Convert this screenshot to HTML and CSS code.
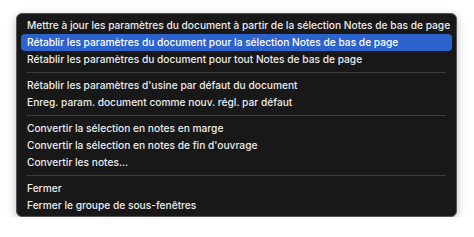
FILE: index.html
```html
<!DOCTYPE html>
<html lang="fr">

<head>
    <meta charset="UTF-8">
    <meta name="viewport" content="width=device-width, initial-scale=1.0">
    <link rel="stylesheet" href="styles.css">
    <title>Menu Notes de bas de page</title>
</head>

<body>
    <div class="menu">
        <div class="menu-item">Mettre à jour les paramètres du document à partir de la sélection Notes de bas de page</div>
        <div class="menu-item active">Rétablir les paramètres du document pour la sélection Notes de bas de page</div>
        <div class="menu-item">Rétablir les paramètres du document pour tout Notes de bas de page</div>
        <div class="menu-separator"></div>
        <div class="menu-item">Rétablir les paramètres d'usine par défaut du document</div>
        <div class="menu-item">Enreg. param. document comme nouv. régl. par défaut</div>
        <div class="menu-separator"></div>
        <div class="menu-item">Convertir la sélection en notes en marge</div>
        <div class="menu-item">Convertir la sélection en notes de fin d'ouvrage</div>
        <div class="menu-item">Convertir les notes...</div>
        <div class="menu-separator"></div>
        <div class="menu-item">Fermer</div>
        <div class="menu-item">Fermer le groupe de sous-fenêtres</div>
    </div>
</body>

</html>
```

FILE: styles.css
```css
html,
body {
    margin: 0;
    background-color: #fff;
}

body {
    padding: 13px 0 0 16px;
    font-family: Inter, "Noto Sans", sans-serif;
}

.menu {
    width: 441px;
    box-sizing: border-box;
    padding: 3px 4px 2px 4px;
    background-color: #181818;
    border: 1px solid #555;
    border-radius: 6px;
    box-shadow: 0 3px 10px rgba(0, 0, 0, 0.25);
}

.menu-item {
    height: 17px;
    line-height: 17px;
    padding: 0 6px;
    font-size: 10.2px;
    font-weight: 500;
    color: #ededed;
    border-radius: 4px;
    white-space: nowrap;
}

.menu-item.active {
    background-color: #2c62cc;
    color: #fff;
}

.menu-separator {
    height: 1px;
    margin: 4px 6px;
    background-color: #3c3c3c;
}
```
